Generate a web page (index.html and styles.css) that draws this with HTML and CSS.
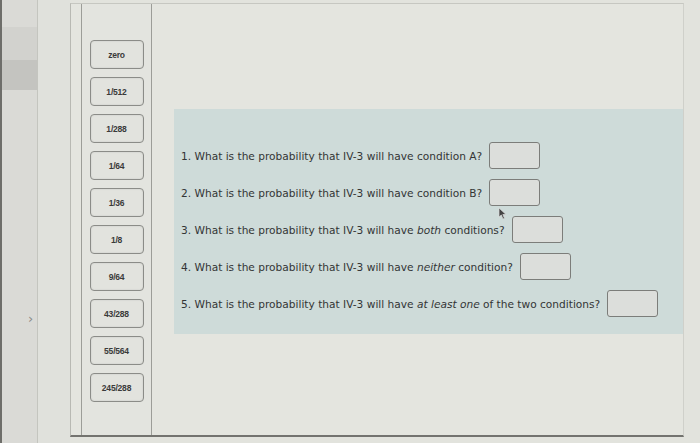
FILE: index.html
```html
<!DOCTYPE html>
<html>
<head>
<meta charset="utf-8">
<link rel="stylesheet" href="styles.css">
</head>
<body>
<div class="screen">
  <div class="sidebar">
    <div class="band band-light"></div>
    <div class="band band-dark"></div>
    <div class="chev">›</div>
  </div>
  <div class="gutter"></div>
  <div class="main">
    <div class="bank">
      <div class="chip">zero</div>
      <div class="chip">1/512</div>
      <div class="chip">1/288</div>
      <div class="chip">1/64</div>
      <div class="chip">1/36</div>
      <div class="chip">1/8</div>
      <div class="chip">9/64</div>
      <div class="chip">43/288</div>
      <div class="chip">55/564</div>
      <div class="chip">245/288</div>
    </div>
    <div class="quiz">
      <div class="row"><span class="q">1. What is the probability that IV-3 will have condition A?</span><span class="box"></span></div>
      <div class="row"><span class="q">2. What is the probability that IV-3 will have condition B?</span><span class="box"></span></div>
      <div class="row"><span class="q">3. What is the probability that IV-3 will have <i>both</i> conditions?</span><span class="box"></span></div>
      <div class="row"><span class="q">4. What is the probability that IV-3 will have <i>neither</i> condition?</span><span class="box"></span></div>
      <div class="row"><span class="q">5. What is the probability that IV-3 will have <i>at least one</i> of the two conditions?</span><span class="box"></span></div>
      <svg class="cursor" width="9" height="13" viewBox="0 0 9 13"><path d="M1 1 L1 10 L3.3 8 L5 12 L6.5 11.3 L4.8 7.5 L8 7.5 Z" fill="#444" stroke="#ddd" stroke-width="0.7"/></svg>
    </div>
  </div>
</div>
</body>
</html>
```

FILE: styles.css
```css
html, body {
  margin: 0;
  padding: 0;
}
body {
  background: #e2e3dd;
  width: 700px;
  height: 443px;
  overflow: hidden;
}
.screen {
  display: flex;
  height: 443px;
}
.sidebar {
  width: 35px;
  border-left: 2px solid #6e6e6a;
  background: #dadad6;
  padding-top: 27px;
  display: flex;
  flex-direction: column;
}
.band-light {
  height: 33px;
  background: #d2d2ce;
}
.band-dark {
  height: 30px;
  background: #c4c4c0;
}
.chev {
  margin-top: 222px;
  margin-left: 26px;
  font-family: "DejaVu Sans", sans-serif;
  font-size: 13px;
  line-height: 14px;
  color: #8a8a88;
}
.gutter {
  width: 32px;
  border-left: 1px solid #c4c5bf;
  background: #e0e1dc;
}
.main {
  width: 612px;
  height: 431px;
  margin-top: 3px;
  border-top: 1px solid #c6c7c1;
  border-left: 1px solid #b8b9b3;
  border-right: 1px solid #cfd0ca;
  border-bottom: 2px solid #73736f;
  background: #e4e5df;
  display: flex;
  align-items: flex-start;
}
.bank {
  margin-left: 10px;
  width: 69px;
  align-self: stretch;
  border-left: 1px solid #9c9d98;
  border-right: 1px solid #9c9d98;
  background: #e3e4df;
  display: flex;
  flex-direction: column;
  align-items: center;
  gap: 8px;
  padding-top: 36px;
}
.chip {
  width: 52px;
  height: 27px;
  border: 1.5px solid #8b8c88;
  border-radius: 4px;
  background: #e2e3de;
  box-shadow: inset 0 0 2px rgba(0,0,0,0.12);
  display: flex;
  align-items: center;
  justify-content: center;
  font-family: "Liberation Sans", Arial, sans-serif;
  font-size: 8.5px;
  font-weight: bold;
  color: #3a3a3a;
  letter-spacing: -0.2px;
}
.quiz {
  position: relative;
  margin-left: 22px;
  margin-top: 105px;
  width: 502px;
  padding: 33px 0 17px 7px;
  background: #cedbd9;
  display: flex;
  flex-direction: column;
  gap: 10px;
}
.row {
  display: flex;
  align-items: center;
  height: 27px;
}
.q {
  font-family: "DejaVu Sans", Verdana, sans-serif;
  font-size: 10.6px;
  color: #333535;
}
.q i {
  font-style: italic;
}
.box {
  width: 49px;
  height: 25px;
  margin-left: 7px;
  border: 1.5px solid #7c7d7a;
  border-radius: 3px;
  background: #dcdedb;
}
.cursor {
  position: absolute;
  left: 324px;
  top: 98px;
}
```
